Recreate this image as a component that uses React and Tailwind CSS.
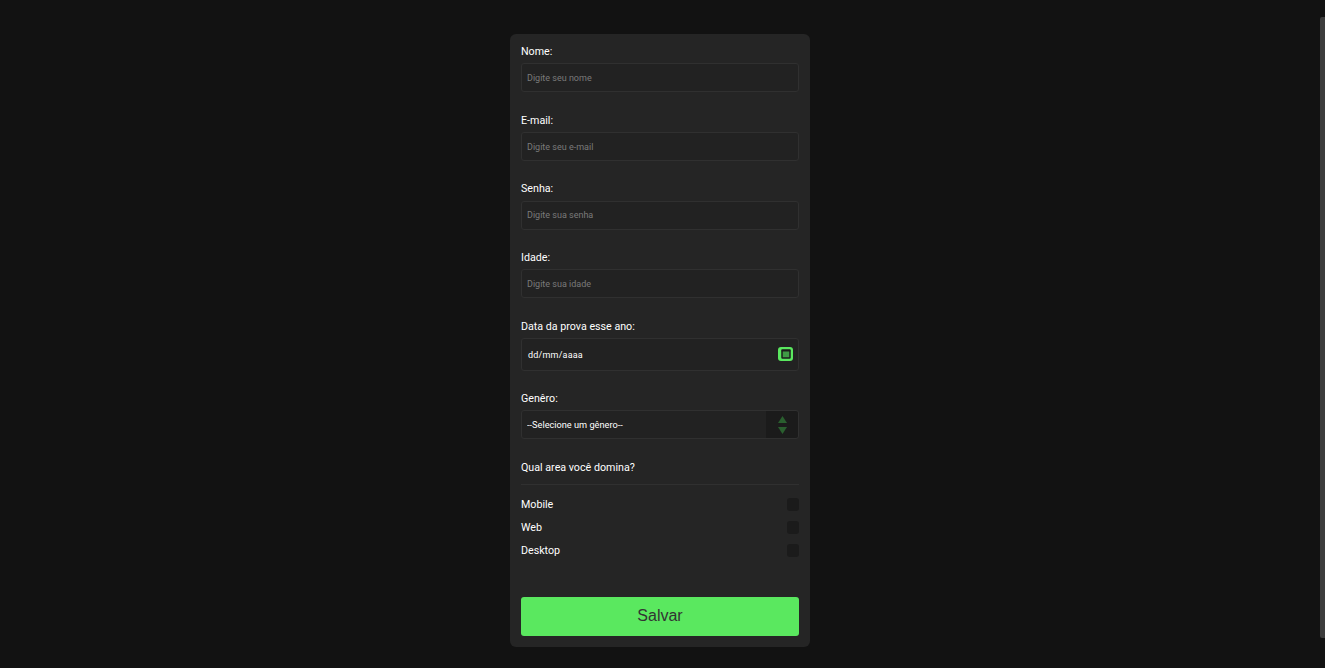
import React from "react";

const font = { fontFamily: "Roboto, sans-serif" };

function Field({ label, placeholder, type = "text" }) {
  return (
    <div className="mb-[20.57px] flex flex-col">
      <label className="mb-[4.1px] h-[15px] text-[10.7px] font-[450] leading-[15px] text-white">{label}</label>
      <input
        type={type}
        placeholder={placeholder}
        className="h-[29px] w-full rounded-[3px] border border-[#303030] bg-[#222222] px-[5px] pt-[0.5px] text-[9px] text-white outline-none placeholder:text-[#7a7a7a]"
      />
    </div>
  );
}

function Check({ label }) {
  return (
    <div className="flex h-[23px] items-center justify-between">
      <span className="pt-[1px] text-[10.7px] font-[450] leading-[14px] text-white">{label}</span>
      <input
        type="checkbox"
        className="h-[13px] w-[12px] appearance-none rounded-[3px] bg-[#1b1b1b]"
      />
    </div>
  );
}

export default function App() {
  return (
    <div style={font} className="relative flex h-[668px] justify-center overflow-hidden bg-[#121212] pr-[5px] pt-[34.3px]">
      <form className="flex h-[612.4px] w-[300px] flex-col rounded-[6px] bg-[#252525] px-[11px] pt-[9.82px]">
        <Field label="Nome:" placeholder="Digite seu nome" />
        <Field label="E-mail:" placeholder="Digite seu e-mail" />
        <Field label="Senha:" placeholder="Digite sua senha" />
        <Field label="Idade:" placeholder="Digite sua idade" />

        <div className="mb-[20.4px] flex flex-col">
          <label className="mb-[4.1px] h-[15px] text-[10.7px] font-[450] leading-[15px] text-white">Data da prova esse ano:</label>
          <div className="flex h-[33px] items-center justify-between rounded-[3px] border border-[#303030] bg-[#222222] pl-[6px] pr-[5px]">
            <span className="pt-[2.5px] text-[9px] font-[450] tracking-[0.2px] text-white">dd/mm/aaaa</span>
            <span className="flex h-[14px] w-[15px] items-center justify-center rounded-[3px] bg-[#5ae85f]">
              <svg width="10" height="10" viewBox="0 0 10 10" fill="none">
                <rect x="1" y="1.5" width="8" height="7.5" rx="0.5" fill="#3f9a45" stroke="#1c1c1c" strokeWidth="1.5" />
                <rect x="0.5" y="0.3" width="9" height="2" fill="#1c1c1c" />
              </svg>
            </span>
          </div>
        </div>

        <div className="mb-[20.9px] flex flex-col">
          <label className="mb-[4.1px] h-[15px] text-[10.7px] font-[450] leading-[15px] text-white">Genêro:</label>
          <div className="relative h-[29px] rounded-[3px] border border-[#303030] bg-[#222222]">
            <select className="h-full w-full appearance-none bg-transparent pl-[5px] text-[9.2px] font-[450] text-white outline-none">
              <option>--Selecione um gênero--</option>
            </select>
            <span className="pointer-events-none absolute inset-y-0 right-0 flex w-[32px] flex-col items-center justify-center gap-[4px] rounded-r-[3px] bg-[#1b1b1b]">
              <svg width="9" height="7" viewBox="0 0 9 7"><path d="M4.5 0L9 7H0z" fill="#2a5f2f" /></svg>
              <svg width="9" height="7" viewBox="0 0 9 7"><path d="M0 0H9L4.5 7z" fill="#2a5f2f" /></svg>
            </span>
          </div>
        </div>

        <p className="h-[15px] text-[10.7px] font-[450] leading-[15px] text-white">Qual area você domina?</p>
        <div className="mt-[9px] h-px bg-[#303030]" />
        <div className="mt-[8px] flex flex-col">
          <Check label="Mobile" />
          <Check label="Web" />
          <Check label="Desktop" />
        </div>

        <button
          type="button"
          style={{ fontFamily: "'Liberation Sans', sans-serif" }}
          className="mt-[35px] h-[39px] w-full rounded-[3px] bg-[#5ae85f] pb-[2px] text-[16px] text-[#333333]"
        >
          Salvar
        </button>
      </form>
      <div className="absolute right-0 top-[17px] h-[621px] w-[5px] rounded-l-[2px] bg-[#3c3c3c]" />
    </div>
  );
}
